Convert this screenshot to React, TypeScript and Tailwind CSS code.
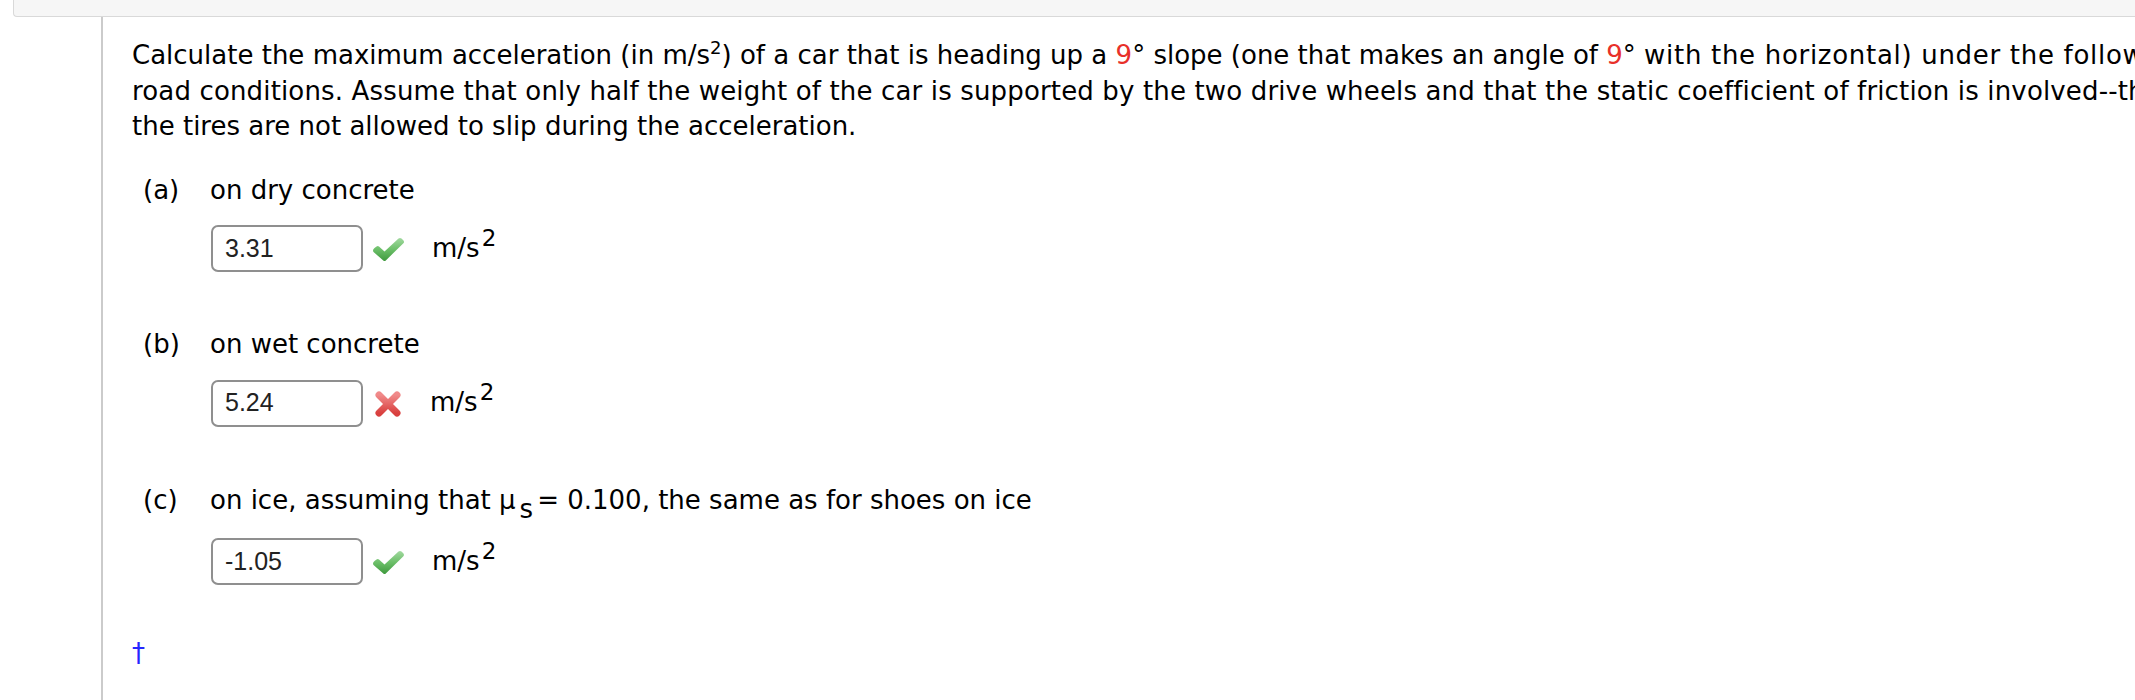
import React from "react";

const red = "text-[#e8302a]";

function CheckIcon() {
  return (
    <svg width="33" height="25" viewBox="0 0 33 25">
      <defs>
        <linearGradient id="chk" x1="0" y1="0" x2="0" y2="1">
          <stop offset="0" stopColor="#a2d9a0" />
          <stop offset="0.5" stopColor="#6cbf69" />
          <stop offset="1" stopColor="#3f9a3e" />
        </linearGradient>
      </defs>
      <path
        d="M1 13.5 Q1 12 2.5 11 L4.5 9.5 Q6 8.7 7 9.6 L12.5 14.5 L26.5 1.5 Q28 0.3 29.5 1.5 L31.5 3.5 Q32.6 5 31.4 6.3 L13.8 23.4 Q12.6 24.5 11.3 23.4 L1.8 15.3 Q1 14.6 1 13.5 Z"
        fill="url(#chk)"
      />
    </svg>
  );
}

function CrossIcon() {
  return (
    <svg width="26" height="26" viewBox="0 0 26 26">
      <defs>
        <linearGradient id="crs" x1="0" y1="0" x2="0" y2="1">
          <stop offset="0" stopColor="#f08a8a" />
          <stop offset="1" stopColor="#d9403f" />
        </linearGradient>
      </defs>
      <g stroke="url(#crs)" strokeWidth="7" strokeLinecap="round">
        <line x1="4" y1="4" x2="22" y2="22" />
        <line x1="22" y1="4" x2="4" y2="22" />
      </g>
    </svg>
  );
}

function Units() {
  return (
    <span className="text-[26px] leading-none">
      m/s<span className="relative -top-[11px] ml-[2px] text-[23px] leading-none">2</span>
    </span>
  );
}

function Answer({ value, correct }: { value: string; correct: boolean }) {
  return (
    <div className="flex items-center ml-[79px]">
      <div className="flex items-center w-[152px] h-[47px] border-2 border-[#8f8f8f] rounded-[7px] pl-[12px] font-['Liberation_Sans',Arial,sans-serif] text-[25px] text-[#222]">
        {value}
      </div>
      {correct ? (
        <div className="ml-[9px] mt-[2px]">
          <CheckIcon />
        </div>
      ) : (
        <div className="ml-[12px] mt-[2px]">
          <CrossIcon />
        </div>
      )}
      <div className={correct ? "ml-[27px]" : "ml-[29px]"}>
        <Units />
      </div>
    </div>
  );
}

function PartLabel({ tag, children }: { tag: string; children: React.ReactNode }) {
  return (
    <div className="flex ml-[11px]">
      <span className="w-[67px] shrink-0">{tag}</span>
      <span>{children}</span>
    </div>
  );
}

export default function App() {
  return (
    <div className="w-[2135px] h-[700px] overflow-hidden bg-white text-black font-['DejaVu_Sans',Verdana,sans-serif]">
      <div className="ml-[13px] h-[17px] bg-[#f6f6f6] border-l border-b border-[#d9d9d9] rounded-bl-[4px]" />
      <div className="flex h-[683px]">
        <div className="w-[101px] shrink-0" />
        <div className="w-[2px] shrink-0 bg-[#cbcbcb]" />
        <div className="pl-[29px] pt-[21px] text-[26px] leading-[35.5px] whitespace-nowrap">
          <p>
            Calculate the maximum acceleration (in m/s
            <span className="relative -top-[10px] text-[18px] leading-none">2</span>) of a car that is heading up a{" "}
            <span className={red}>9</span>° slope (one that makes an angle of <span className={red}>9</span>°{" "}
            <span className="tracking-[0.7px]">with the horizontal) under the following</span>
            <br />
            <span className="tracking-[0.15px]">
              road conditions. Assume that only half the weight of the car is supported by the two drive wheels and
              that the static coefficient of friction is involved--that is,
            </span>
            <br />
            the tires are not allowed to slip during the acceleration.
          </p>

          <div className="mt-[28px]">
            <PartLabel tag="(a)">on dry concrete</PartLabel>
          </div>
          <div className="mt-[17px]">
            <Answer value="3.31" correct />
          </div>

          <div className="mt-[55px]">
            <PartLabel tag="(b)">on wet concrete</PartLabel>
          </div>
          <div className="mt-[17px]">
            <Answer value="5.24" correct={false} />
          </div>

          <div className="mt-[56px]">
            <PartLabel tag="(c)">
              on ice, assuming that μ<span className="relative top-[9px] ml-[4px] mr-[4px]">s</span>= 0.100, the
              same as for shoes on ice
            </PartLabel>
          </div>
          <div className="mt-[20px]">
            <Answer value="-1.05" correct />
          </div>

          <div className="mt-[51px] text-[#2626ff]">†</div>
        </div>
      </div>
    </div>
  );
}
